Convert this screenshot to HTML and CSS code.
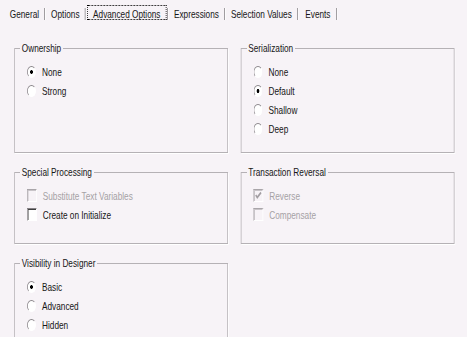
FILE: index.html
```html
<!DOCTYPE html>
<html lang="en">
<head>
  <meta charset="UTF-8" />
  <title>Advanced Options</title>
  <link rel="stylesheet" href="styles.css">
</head>
<body>

  <div class="page">
    <nav class="tabs">
      <div class="tab"><span class="tab-label">General</span></div>
      <div class="tab"><span class="tab-label">Options</span></div>
      <div class="tab active"><span class="tab-label">Advanced Options</span></div>
      <div class="tab"><span class="tab-label">Expressions</span></div>
      <div class="tab"><span class="tab-label">Selection Values</span></div>
      <div class="tab"><span class="tab-label">Events</span></div>
    </nav>

    <div class="groups">
      <fieldset class="group">
        <legend>Ownership</legend>
        <div class="options">
          <label class="option"><span class="radio on"></span>None</label>
          <label class="option"><span class="radio"></span>Strong</label>
        </div>
      </fieldset>

      <fieldset class="group">
        <legend>Serialization</legend>
        <div class="options">
          <label class="option"><span class="radio"></span>None</label>
          <label class="option"><span class="radio on"></span>Default</label>
          <label class="option"><span class="radio"></span>Shallow</label>
          <label class="option"><span class="radio"></span>Deep</label>
        </div>
      </fieldset>

      <fieldset class="group">
        <legend>Special Processing</legend>
        <div class="options">
          <label class="option disabled"><span class="check"></span>Substitute Text Variables</label>
          <label class="option"><span class="check"></span>Create on Initialize</label>
        </div>
      </fieldset>

      <fieldset class="group">
        <legend>Transaction Reversal</legend>
        <div class="options">
          <label class="option disabled">
            <span class="check">
              <svg width="11" height="11" viewBox="0 0 11 11"><polyline points="2,5 4,7.5 9,2.5" fill="none" stroke="#a29ea2" stroke-width="2"/></svg>
            </span>Reverse
          </label>
          <label class="option disabled"><span class="check"></span>Compensate</label>
        </div>
      </fieldset>

      <fieldset class="group">
        <legend>Visibility in Designer</legend>
        <div class="options">
          <label class="option"><span class="radio on"></span>Basic</label>
          <label class="option"><span class="radio"></span>Advanced</label>
          <label class="option"><span class="radio"></span>Hidden</label>
        </div>
      </fieldset>
    </div>
  </div>

</body>
</html>
```

FILE: styles.css
```css
html, body {
  margin: 0;
  height: 100%;
  overflow: hidden;
  background: #f7f3f7;
}

body {
  font-family: "Liberation Sans", Arial, sans-serif;
  font-size: 11px;
  color: #161616;
}

/* the old dialog is drawn narrow, so the whole page is squeezed sideways */
.page {
  width: 622px;
  height: 337px;
  overflow: hidden;
  transform: scaleX(0.75);
  transform-origin: 0 0;
}

.tabs {
  display: flex;
  height: 20px;
  padding: 5px 0 0 5px;
  box-sizing: border-box;
}

.tab {
  display: flex;
  align-items: flex-end;
}

.tab::after {
  content: "";
  width: 1px;
  height: 12px;
  margin-left: 1px;
  background: #858185;
  box-shadow: 1px 0 0 #fff;
}

.tab-label {
  margin-left: 2px;
  padding: 3px 5px 0;
  line-height: 10px;
  border: 1px dotted transparent;
}

.tab:last-child .tab-label {
  margin-left: 4px;
}

.tab.active .tab-label {
  padding: 3px 7px 0;
  border-color: #000;
}

.groups {
  display: grid;
  grid-template-columns: 285px 285px;
  grid-template-rows: 111px 78px 81px;
  column-gap: 17px;
  row-gap: 13px;
  margin: 22px 0 0 19px;
}

.group {
  margin: 0;
  padding: 0 0 0 6px;
  min-width: 0;
  height: 100%;
  box-sizing: border-box;
  border: 1px solid #b5b1b5;
  box-shadow: 1px 1px 0 #fff;
}

.group legend {
  margin-left: 1px;
  padding: 0 2px;
  line-height: 12px;
}

.options {
  padding: 8px 0 0 10px;
}

.option {
  display: flex;
  align-items: center;
  gap: 8px;
  height: 19px;
}

.option.disabled {
  color: #a5a1a5;
}

.radio {
  flex: none;
  width: 12px;
  height: 12px;
  box-sizing: border-box;
  border-radius: 50%;
  border: 1px solid;
  border-color: #8a868a #fff #fff #8a868a;
  background: #fff;
}

.radio.on {
  background: radial-gradient(circle, #000 0 1.6px, #fff 2.2px);
}

.check {
  flex: none;
  display: flex;
  width: 13px;
  height: 13px;
  box-sizing: border-box;
  border: 1px solid;
  border-color: #868286 #fff #fff #868286;
  box-shadow: inset 1px 1px 0 #404040;
  background: #fff;
}

.check svg {
  display: block;
}

.option.disabled .check {
  border-color: #a9a5a9 #fff #fff #a9a5a9;
  box-shadow: inset 1px 1px 0 #c8c4c8;
  background: #f7f3f7;
}
```
